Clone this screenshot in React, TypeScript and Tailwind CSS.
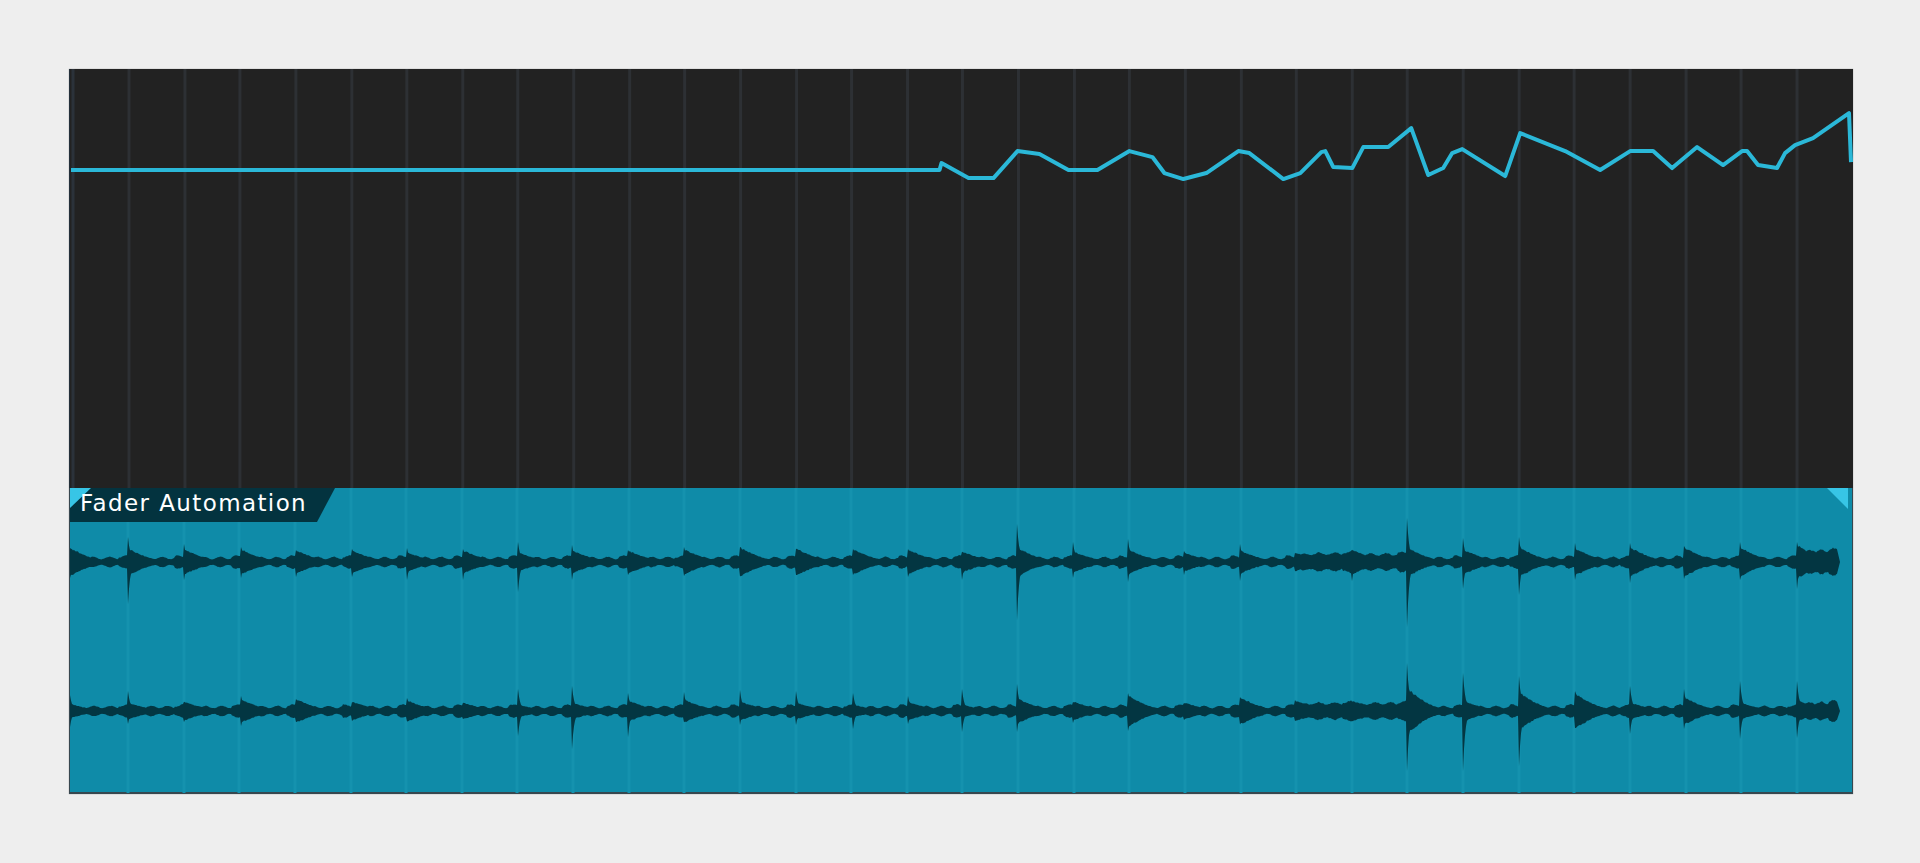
const gridLines = Array.from({ length: 31 }, (_, i) => Math.round(128 + 55.63 * i))

const faderPoints = [
  [70, 170], [939, 170], [941, 163], [968, 178], [993, 178], [1017, 151], [1039, 154], [1068, 170],
  [1097, 170], [1129, 151], [1152, 157], [1164, 173], [1183, 179], [1206, 173], [1238, 151],
  [1249, 153], [1283, 179], [1300, 173], [1321, 152], [1325, 151], [1333, 167], [1352, 168],
  [1363, 147], [1388, 147], [1411, 128], [1428, 175], [1443, 168], [1452, 153], [1462, 149],
  [1505, 176], [1520, 133], [1565, 151], [1600, 170], [1630, 151], [1653, 151], [1672, 168],
  [1697, 147], [1723, 165], [1742, 151], [1747, 151], [1758, 165], [1777, 168], [1785, 153],
  [1795, 145], [1813, 138], [1849, 113], [1851, 162],
]

// x, spike up, spike down, body half height, sustain
type Hit = [number, number, number, number, number?]

const upperHits: Hit[] = [
  [69, 13, 25, 14], [128, 25, 42, 13], [184, 18, 18, 12], [241, 15, 16, 12], [296, 12, 15, 11],
  [352, 13, 15, 11], [407, 14, 18, 9], [463, 13, 18, 11], [518, 20, 30, 9], [572, 17, 18, 11],
  [628, 12, 13, 11], [684, 15, 14, 12], [740, 15, 14, 14], [796, 13, 13, 13], [853, 13, 13, 12],
  [908, 13, 15, 12], [962, 10, 18, 10], [1017, 38, 58, 14], [1073, 20, 16, 10], [1128, 23, 20, 12],
  [1184, 11, 13, 9], [1240, 18, 19, 11], [1295, 9, 9, 9, 7], [1352, 12, 19, 12, 6], [1407, 44, 65, 14],
  [1463, 24, 27, 12], [1519, 25, 33, 14], [1575, 19, 18, 13], [1630, 19, 21, 14], [1684, 16, 17, 14],
  [1740, 20, 18, 14], [1797, 20, 27, 16, 12],
]

const lowerHits: Hit[] = [
  [69, 24, 25, 7], [128, 20, 13, 8], [184, 8, 11, 9], [241, 15, 15, 11], [296, 12, 10, 11],
  [352, 8, 10, 9], [407, 13, 10, 10], [463, 8, 8, 8], [518, 22, 25, 6], [572, 25, 38, 8],
  [628, 18, 26, 10], [684, 19, 11, 11], [740, 21, 14, 9], [796, 20, 14, 8], [853, 18, 18, 6],
  [908, 15, 13, 9], [962, 22, 21, 6], [1017, 27, 21, 12], [1073, 8, 12, 9], [1128, 18, 20, 15],
  [1184, 8, 9, 8], [1240, 14, 13, 13], [1295, 11, 10, 10, 6], [1352, 8, 10, 10, 6], [1407, 48, 60, 22],
  [1463, 38, 60, 10], [1519, 35, 55, 18], [1575, 20, 17, 17], [1630, 25, 23, 8], [1684, 22, 18, 13],
  [1740, 30, 28, 8], [1797, 30, 27, 10, 7],
]

function noise(x: number, seed: number) {
  const v = Math.sin(x * 12.9898 + seed * 78.233) * 43758.5453
  return v - Math.floor(v)
}

function wavePath(hits: Hit[], center: number, seed: number) {
  const upper: string[] = []
  const lower: string[] = []
  for (let i = 0; i < hits.length; i++) {
    const [start, up, down, body, sustain = 0] = hits[i]
    const end = i + 1 < hits.length ? hits[i + 1][0] : 1838
    const len = end - start
    for (let x = start; x < end; x++) {
      const t = x - start
      const decay = body * Math.exp(-Math.pow(t / 20, 1.3))
      const hump = Math.pow(Math.sin(((t + noise(i, seed) * 8) / len) * Math.PI * 3.5), 2)
      const tail = 2.8 + sustain * 0.6 + 2.4 * hump * Math.min(1, t / 18)
      const swell = t > len - 10 ? 1.4 : 0
      const level = Math.max(decay, tail) + swell
      const a = Math.max(up * Math.exp(-t / 2.4), level * (0.94 + 0.12 * noise(x, seed)))
      const b = Math.max(down * Math.exp(-t / 2.2), level * (0.94 + 0.12 * noise(x, seed + 3)))
      upper.push(`${x},${(center - a).toFixed(1)}`)
      lower.push(`${x},${(center + b).toFixed(1)}`)
    }
  }
  upper.push(`1840,${center}`)
  return `M${upper.join('L')}L${lower.reverse().join('L')}Z`
}

function GridLines({ y1, y2, color }: { y1: number; y2: number; color: string }) {
  return (
    <>
      {gridLines.map((x) => (
        <line key={x} x1={x} x2={x} y1={y1} y2={y2} stroke={color} strokeWidth={3} />
      ))}
    </>
  )
}

export default function App() {
  return (
    <div className="h-[863px] w-[1920px] overflow-hidden bg-[#eeeeee] pl-[69px] pt-[69px]">
      <div className="flex h-[725px] w-[1784px] flex-col shadow-[0_0_1px_#8a8a8a]">
        <div className="relative h-[419px] border-l border-[#23303a] bg-[#222222]">
          <svg className="absolute inset-0 h-full w-full blur-[0.6px]" viewBox="69 69 1784 419">
            <GridLines y1={69} y2={488} color="#2d3034" />
            <line x1={72} x2={72} y1={69} y2={488} stroke="#2b323a" strokeWidth={3} />
            <polyline
              points={faderPoints.map((p) => p.join(',')).join(' ')}
              fill="none"
              stroke="#2bb8d8"
              strokeWidth={4}
              strokeLinejoin="round"
            />
          </svg>
        </div>
        <div className="relative flex-1 border border-t-0 border-b-2 border-[#37474f] bg-[#0f8ba8]">
          <svg className="absolute left-0 top-0 h-[305px] w-[1782px]" viewBox="70 488 1782 305">
            <GridLines y1={488} y2={793} color="#1592ae" />
            <path className="blur-[0.6px]" d={wavePath(upperHits, 562, 1)} fill="#033642" />
            <path className="blur-[0.6px]" d={wavePath(lowerHits, 711, 2)} fill="#033642" />
            <polygon points="1827,488 1848,488 1848,509" fill="#37c5e6" />
          </svg>
          <div className="absolute left-0 top-0 flex h-[34px] w-[265px] items-center bg-[#03333f] pb-[3px] pl-[10px] text-[23px] tracking-[1.4px] text-white [clip-path:polygon(0_0,100%_0,247px_100%,0_100%)] [font-family:'DejaVu_Sans',sans-serif]">
            <div className="absolute left-0 top-0 h-[20px] w-[21px] bg-[#37c5e6] [clip-path:polygon(0_0,100%_0,0_100%)]" />
            <span className="relative">Fader Automation</span>
          </div>
        </div>
      </div>
    </div>
  )
}
